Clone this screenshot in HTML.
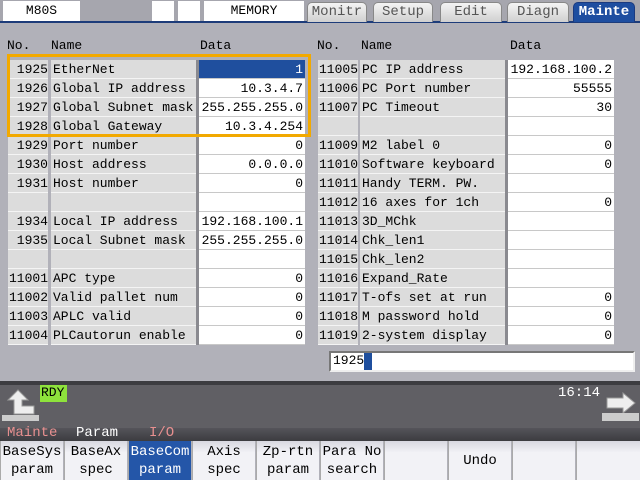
<!DOCTYPE html><html><head><style>
*{margin:0;padding:0;box-sizing:border-box}
body{width:640px;height:480px;overflow:hidden;background:#b1b1b9;font-family:"Liberation Mono",monospace;font-size:13px;color:#000;position:relative}
.a{position:absolute}
.top{left:0;top:0;width:640px;height:23px;background:#a6a6ae;border-bottom:2px solid #1d3c7a}
.box{background:#fff;height:20px;top:1px;text-align:center;line-height:20px}
.tab{top:2px;height:20px;background:linear-gradient(#f4f4f4,#d0d0d0);border:1px solid #888;border-bottom:none;border-radius:5px 5px 0 0;color:#555;text-align:center;line-height:19px;font-size:14px}
.row{height:19px;line-height:19px;white-space:pre}
.no{background:#dcdcdc;text-align:right;border-bottom:1px solid #f4f4f4}
.nm{background:#dcdcdc;border-bottom:1px solid #f4f4f4;padding-left:2px}
.dt{background:#fff;text-align:right;border-bottom:1px solid #c8c8c8;padding-right:2px}
.hd{top:38px;line-height:16px}
.sk{top:441px;height:39px;width:63px;background:linear-gradient(#d8d8e0,#f2f2f6 30%,#f2f2f6);border-left:1px solid #aaa;text-align:center;font-size:14px;line-height:18px;padding-top:2px}
</style></head><body>
<div class="a top"></div>
<div class="a box" style="left:3px;width:77px">M80S</div>
<div class="a box" style="left:152px;width:22px"></div>
<div class="a box" style="left:178px;width:22px"></div>
<div class="a box" style="left:204px;width:100px">MEMORY</div>
<div class="a tab" style="left:307px;width:60px">Monitr</div>
<div class="a tab" style="left:373px;width:60px">Setup</div>
<div class="a tab" style="left:440px;width:62px">Edit</div>
<div class="a tab" style="left:507px;width:62px">Diagn</div>
<div class="a tab" style="left:573px;width:62px;background:#1e4ea0;color:#fff;border-color:#1a3a80;font-weight:bold">Mainte</div>
<div class="a hd" style="left:7px">No.</div><div class="a hd" style="left:51px">Name</div><div class="a hd" style="left:200px">Data</div>
<div class="a hd" style="left:317px">No.</div><div class="a hd" style="left:361px">Name</div><div class="a hd" style="left:510px">Data</div>
<div class="a" style="left:8px;top:60px">
<div class="a" style="left:0;top:0;width:40px">
<div class="row no">1925</div><div class="row no">1926</div><div class="row no">1927</div><div class="row no">1928</div><div class="row no">1929</div><div class="row no">1930</div><div class="row no">1931</div><div class="row no"> </div><div class="row no">1934</div><div class="row no">1935</div><div class="row no"> </div><div class="row no">11001</div><div class="row no">11002</div><div class="row no">11003</div><div class="row no">11004</div></div>
<div class="a" style="left:43px;top:0;width:145px">
<div class="row nm">EtherNet</div><div class="row nm">Global IP address</div><div class="row nm">Global Subnet mask</div><div class="row nm">Global Gateway</div><div class="row nm">Port number</div><div class="row nm">Host address</div><div class="row nm">Host number</div><div class="row nm"> </div><div class="row nm">Local IP address</div><div class="row nm">Local Subnet mask</div><div class="row nm"> </div><div class="row nm">APC type</div><div class="row nm">Valid pallet num</div><div class="row nm">APLC valid</div><div class="row nm">PLCautorun enable</div></div>
<div class="a" style="left:188px;top:0;width:3px;height:285px;background:#8a8a90"></div>
<div class="a" style="left:191px;top:0;width:106px">
<div class="row dt" style="background:#1f4f9e;color:#fff">1</div><div class="row dt">10.3.4.7</div><div class="row dt">255.255.255.0</div><div class="row dt">10.3.4.254</div><div class="row dt">0</div><div class="row dt">0.0.0.0</div><div class="row dt">0</div><div class="row dt"> </div><div class="row dt">192.168.100.1</div><div class="row dt">255.255.255.0</div><div class="row dt"> </div><div class="row dt">0</div><div class="row dt">0</div><div class="row dt">0</div><div class="row dt">0</div></div>
</div>
<div class="a" style="left:318px;top:60px">
<div class="a" style="left:0;top:0;width:40px">
<div class="row no">11005</div><div class="row no">11006</div><div class="row no">11007</div><div class="row no"> </div><div class="row no">11009</div><div class="row no">11010</div><div class="row no">11011</div><div class="row no">11012</div><div class="row no">11013</div><div class="row no">11014</div><div class="row no">11015</div><div class="row no">11016</div><div class="row no">11017</div><div class="row no">11018</div><div class="row no">11019</div></div>
<div class="a" style="left:42px;top:0;width:145px">
<div class="row nm">PC IP address</div><div class="row nm">PC Port number</div><div class="row nm">PC Timeout</div><div class="row nm"> </div><div class="row nm">M2 label 0</div><div class="row nm">Software keyboard</div><div class="row nm">Handy TERM. PW.</div><div class="row nm">16 axes for 1ch</div><div class="row nm">3D_MChk</div><div class="row nm">Chk_len1</div><div class="row nm">Chk_len2</div><div class="row nm">Expand_Rate</div><div class="row nm">T-ofs set at run</div><div class="row nm">M password hold</div><div class="row nm">2-system display</div></div>
<div class="a" style="left:187px;top:0;width:3px;height:285px;background:#8a8a90"></div>
<div class="a" style="left:190px;top:0;width:106px">
<div class="row dt">192.168.100.2</div><div class="row dt">55555</div><div class="row dt">30</div><div class="row dt"> </div><div class="row dt">0</div><div class="row dt">0</div><div class="row dt"> </div><div class="row dt">0</div><div class="row dt"> </div><div class="row dt"> </div><div class="row dt"> </div><div class="row dt"> </div><div class="row dt">0</div><div class="row dt">0</div><div class="row dt">0</div></div>
</div>
<div class="a" style="left:7px;top:54px;width:304px;height:83px;border:3px solid #f2a900"></div>
<div class="a" style="left:329px;top:351px;width:306px;height:21px;background:#fff;border:2px solid #777;border-right-color:#eee;border-bottom-color:#eee;line-height:16px;padding-left:2px">1925<span style="display:inline-block;width:8px;height:17px;background:#1f4f9e;vertical-align:top"></span></div>
<div class="a" style="left:0;top:381px;width:640px;height:4px;background:#3c3c40"></div>
<div class="a" style="left:0;top:385px;width:640px;height:56px;background:#605f64"></div>
<div class="a" style="left:0;top:428px;width:640px;height:13px;background:linear-gradient(#55545a,#3c3c40)"></div>
<div class="a" style="left:40px;top:385px;width:27px;height:17px;background:#8ee23c;line-height:16px;padding-left:1px">RDY</div>
<div class="a" style="left:558px;top:385px;color:#fff;font-size:14px">16:14</div>
<svg class="a" style="left:2px;top:388px" width="38" height="34"><path d="M6 12 L16 2 L26 12 L20 12 L20 18 L32 18 L32 26 L12 26 L12 12Z" fill="#eee" stroke="#999"/><rect x="0" y="27" width="37" height="6" fill="#ccc"/></svg>
<svg class="a" style="left:601px;top:392px" width="38" height="30"><path d="M6 6 L22 6 L22 1 L34 11 L22 21 L22 16 L6 16Z" fill="#eee" stroke="#999"/><rect x="1" y="21" width="37" height="8" fill="#ccc"/></svg>
<div class="a" style="left:7px;top:425px;color:#e89090;font-size:14px">Mainte</div>
<div class="a" style="left:76px;top:425px;color:#fff;font-size:14px">Param</div>
<div class="a" style="left:149px;top:425px;color:#e89090;font-size:14px">I/O</div>
<div class="a sk" style="left:0">BaseSys<br>param</div>
<div class="a sk" style="left:64px">BaseAx<br>spec</div>
<div class="a sk" style="left:128px;background:#2456a8;color:#fff">BaseCom<br>param</div>
<div class="a sk" style="left:192px">Axis<br>spec</div>
<div class="a sk" style="left:256px">Zp-rtn<br>param</div>
<div class="a sk" style="left:320px">Para No<br>search</div>
<div class="a sk" style="left:384px"></div>
<div class="a sk" style="left:448px;padding-top:11px">Undo</div>
<div class="a sk" style="left:512px"></div>
<div class="a sk" style="left:576px;width:64px"></div>
</body></html>
